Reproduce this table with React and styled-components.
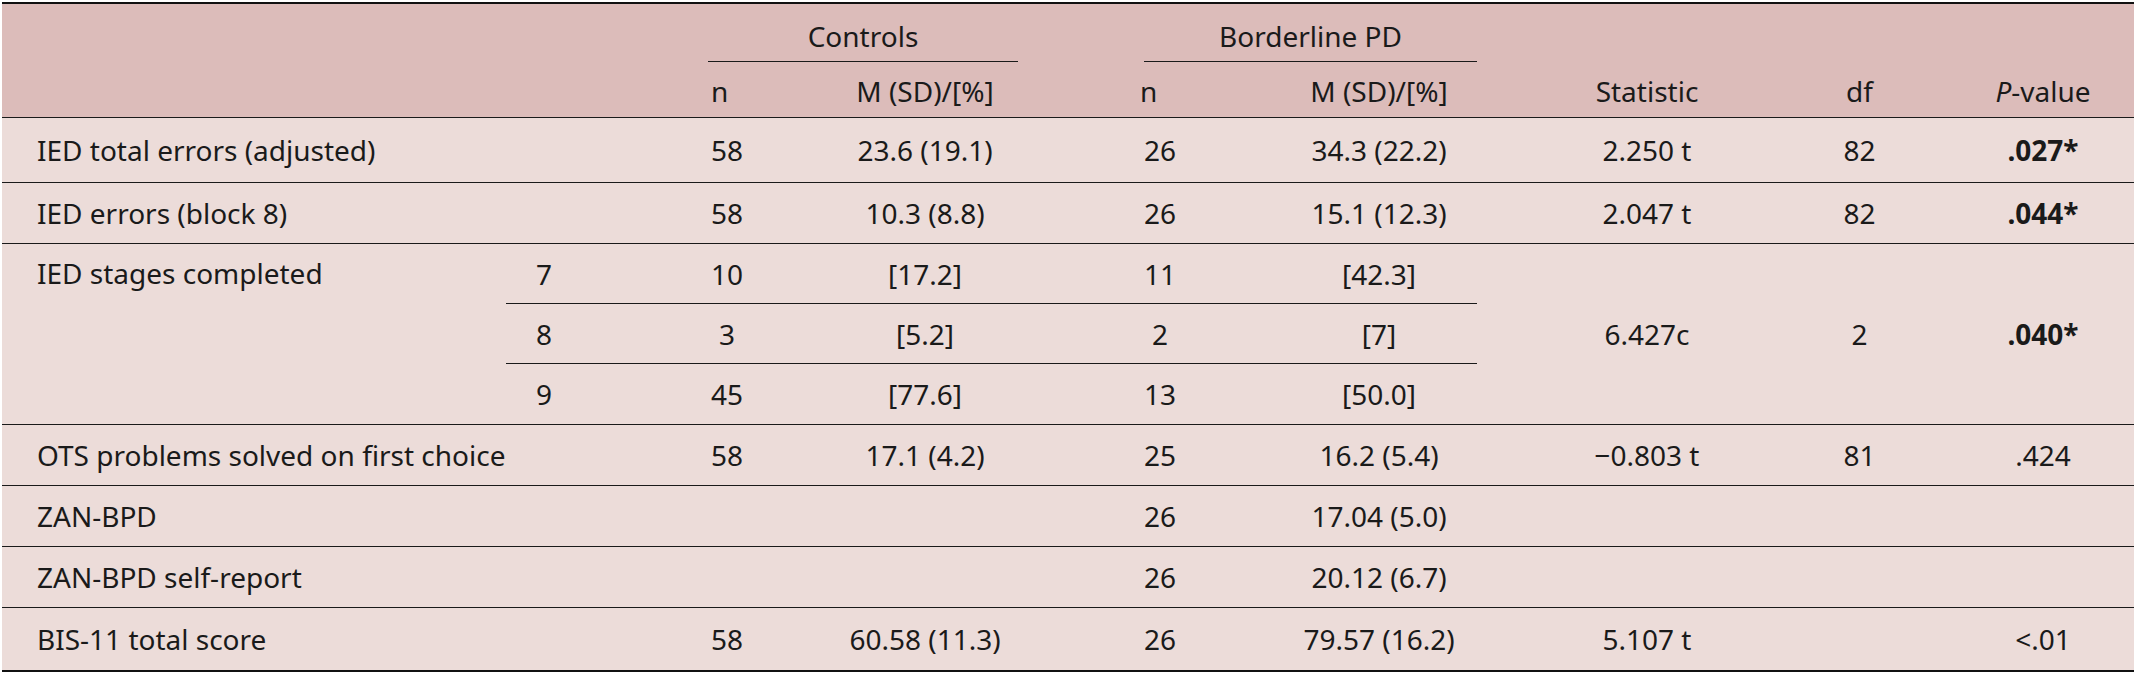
import React from 'react';
import styled, { createGlobalStyle } from 'styled-components';

const GlobalStyle = createGlobalStyle`
  html, body {
    margin: 0;
    padding: 0;
    background: #ffffff;
  }
  body {
    font-family: "Noto Sans", "Liberation Sans", sans-serif;
    color: #1a1a1a;
  }
`;

const COLUMNS = '504px 118px 206px 200px 260px 187px 340px 133px 186px';

// per-column alignment: padding shifts the centre of each column
const cols = [
  { align: 'flex-start', pl: 35, pr: 0 },
  { align: 'center', pl: 0, pr: 42 },
  { align: 'center', pl: 0, pr: 0 },
  { align: 'center', pl: 0, pr: 10 },
  { align: 'center', pl: 0, pr: 0 },
  { align: 'center', pl: 0, pr: 9 },
  { align: 'center', pl: 0, pr: 0 },
  { align: 'center', pl: 0, pr: 48 },
  { align: 'center', pl: 0, pr: 0 },
];

const Wrapper = styled.div`
  padding: 2px 0 4px 2px;
`;

const Table = styled.div`
  border-top: 2px solid #111;
  border-bottom: 2px solid #111;
  font-size: 28px;
  line-height: 1;
`;

const Head = styled.div`
  background: #dcbcba;
  display: grid;
  grid-template-columns: ${COLUMNS};
  grid-template-rows: 58px 55px;
  border-bottom: 1px solid #1a1a1a;
`;

const GroupTitle = styled.div`
  grid-row: 1;
  grid-column: ${(p) => p.$span};
  margin: 0 ${(p) => p.$mr}px 0 ${(p) => p.$ml}px;
  border-bottom: 1px solid #1a1a1a;
  display: flex;
  align-items: center;
  justify-content: center;
  padding-top: 6px;
`;

const Body = styled.div`
  background: #ecdcd9;
`;

const Row = styled.div`
  display: grid;
  grid-template-columns: ${COLUMNS};
  grid-template-rows: ${(p) => (p.$rows ? `repeat(${p.$rows}, 60px)` : `${p.$h || 60}px`)};
  border-bottom: 1px solid #1a1a1a;

  &:last-child {
    border-bottom: none;
    grid-template-rows: 62px;
  }
`;

const Cell = styled.div`
  display: flex;
  align-items: center;
  justify-content: ${(p) => cols[p.$c].align};
  padding-left: ${(p) => (p.$pl ?? cols[p.$c].pl)}px;
  padding-right: ${(p) => cols[p.$c].pr}px;
  white-space: nowrap;
  box-sizing: border-box;
  font-weight: ${(p) => (p.$bold ? 700 : 400)};
  grid-column: ${(p) => p.$c + 1};
  grid-row: ${(p) => p.$row || 'auto'};
  align-self: stretch;
  ${(p) => p.$top && 'align-items: flex-start; padding-top: 15px;'}
  ${(p) => p.$line && 'border-bottom: 1px solid #1a1a1a;'}
`;

const HeadCell = styled(Cell)`
  grid-row: 2;
  padding-top: 2px;
`;

const Italic = styled.span`
  font-style: italic;
`;

const rows = [
  ['IED total errors (adjusted)', '', '58', '23.6 (19.1)', '26', '34.3 (22.2)', '2.250 t', '82', '.027*'],
  ['IED errors (block 8)', '', '58', '10.3 (8.8)', '26', '15.1 (12.3)', '2.047 t', '82', '.044*'],
];

const stages = [
  ['7', '10', '[17.2]', '11', '[42.3]'],
  ['8', '3', '[5.2]', '2', '[7]'],
  ['9', '45', '[77.6]', '13', '[50.0]'],
];

const tail = [
  ['OTS problems solved on first choice', '', '58', '17.1 (4.2)', '25', '16.2 (5.4)', '\u22120.803 t', '81', '.424'],
  ['ZAN-BPD', '', '', '', '26', '17.04 (5.0)', '', '', ''],
  ['ZAN-BPD self-report', '', '', '', '26', '20.12 (6.7)', '', '', ''],
  ['BIS-11 total score', '', '58', '60.58 (11.3)', '26', '79.57 (16.2)', '5.107 t', '', '<.01'],
];

const isBold = (v) => v.endsWith('*');

const DataRow = ({ values, h }) => (
  <Row $h={h}>
    {values.map((v, i) => (
      <Cell key={i} $c={i} $bold={isBold(v)}>
        {v}
      </Cell>
    ))}
  </Row>
);

const App = () => (
  <Wrapper>
    <GlobalStyle />
    <Table>
      <Head>
        <GroupTitle $span="3 / 5" $ml={84} $mr={12}>
          Controls
        </GroupTitle>
        <GroupTitle $span="5 / 7" $ml={114} $mr={0}>
          Borderline PD
        </GroupTitle>
        <HeadCell $c={2} $pl={87} style={{ justifyContent: 'flex-start' }}>
          n
        </HeadCell>
        <HeadCell $c={3}>M (SD)/[%]</HeadCell>
        <HeadCell $c={4} $pl={110} style={{ justifyContent: 'flex-start' }}>
          n
        </HeadCell>
        <HeadCell $c={5}>M (SD)/[%]</HeadCell>
        <HeadCell $c={6}>Statistic</HeadCell>
        <HeadCell $c={7}>df</HeadCell>
        <HeadCell $c={8}>
          <Italic>P</Italic>-value
        </HeadCell>
      </Head>
      <Body>
        {rows.map((r, i) => (
          <DataRow key={i} values={r} h={i === 0 ? 64 : 60} />
        ))}
        <Row $rows={3}>
          <Cell $c={0} $row="1 / 4" $top>
            IED stages completed
          </Cell>
          {stages.map((s, ri) =>
            s.map((v, ci) => (
              <Cell key={`${ri}-${ci}`} $c={ci + 1} $row={ri + 1} $line={ri < 2}>
                {v}
              </Cell>
            ))
          )}
          <Cell $c={6} $row="1 / 4">6.427c</Cell>
          <Cell $c={7} $row="1 / 4">2</Cell>
          <Cell $c={8} $row="1 / 4" $bold>
            .040*
          </Cell>
        </Row>
        {tail.map((r, i) => (
          <DataRow key={i} values={r} />
        ))}
      </Body>
    </Table>
  </Wrapper>
);

export default App;
